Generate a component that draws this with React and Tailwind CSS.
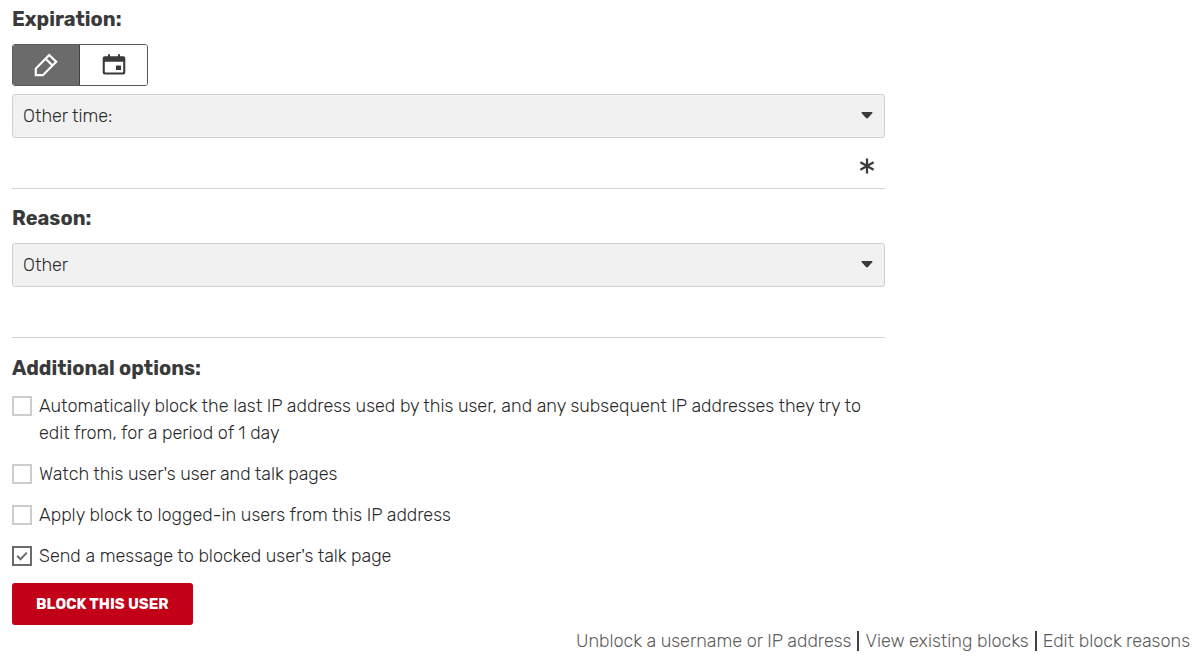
import React, { useState } from "react";

const blockOptions = [
  {
    id: "autoblock",
    label:
      "Automatically block the last IP address used by this user, and any subsequent IP addresses they try to edit from, for a period of 1 day",
    checked: false,
  },
  { id: "watch", label: "Watch this user's user and talk pages", checked: false },
  { id: "hardblock", label: "Apply block to logged-in users from this IP address", checked: false },
  { id: "message", label: "Send a message to blocked user's talk page", checked: true },
];

const footerLinks = ["Unblock a username or IP address", "View existing blocks", "Edit block reasons"];

const PencilIcon = () => (
  <svg viewBox="0 0 24 24" className="size-6" fill="none" stroke="currentColor" strokeWidth="2.2" aria-hidden="true">
    <path d="M1.8 22.2v-6.6L15.2 2l7 6.800L8.900 22.200z" />
    <path d="M11.600 5.700l6.900 6.800" />
  </svg>
);

const CalendarIcon = () => (
  <svg viewBox="0 0 24 24" className="size-6" fill="currentColor" aria-hidden="true">
    <path
      fillRule="evenodd"
      d="M6 1.200h2v2h8v-2h2v2h3.300a2 2 0 0 1 2 2v14.200a2 2 0 0 1-2 2H2.700a2 2 0 0 1-2-2V5.200a2 2 0 0 1 2-2H6zM2.800 8.800v9.900c0 .4.300.700.700.700h17c.4 0 .7-.3.700-.7V8.800z"
    />
    <path d="M14 12.400h5v4.600h-5z" />
  </svg>
);

const DropDown = ({ id, label, children }) => (
  <div className="relative">
    <select
      id={id}
      aria-label={label}
      className="block h-11 w-full appearance-none rounded-[3px] border border-[#d0d0d0] bg-[#f1f1f1] pl-2.5 pr-9 text-lg font-[330] text-[#2a2a2a]"
    >
      {children}
    </select>
    <svg
      viewBox="0 0 12 7"
      className="pointer-events-none absolute right-3 top-[18px] h-[7px] w-3"
      fill="currentColor"
      aria-hidden="true"
    >
      <path d="M1.200 0h9.600c.7 0 1 .8.500 1.300L7 6.100c-.6.600-1.400.600-2 0L.7 1.300C.2.8.5 0 1.200 0z" />
    </svg>
  </div>
);

const modeClass =
  "flex h-full w-[68px] items-center justify-center first:border-r first:border-[#404040]";

const App = () => {
  const [mode, setMode] = useState("relative");
  const [options, setOptions] = useState(blockOptions);

  const toggleOption = (id) =>
    setOptions(options.map((o) => (o.id === id ? { ...o, checked: !o.checked } : o)));

  return (
    <div className="bg-white pl-3 pr-2.5 pt-1 font-['Rubik','Roboto',sans-serif] text-lg leading-[27px] font-[330] text-[#3a3a3a]">
      <form className="max-w-[873px]" onSubmit={(e) => e.preventDefault()}>
        <h2 className="mb-2.5 text-xl leading-[30px] font-bold">Expiration:</h2>
        <div className="mb-2 flex h-[42px] w-[136px] overflow-hidden rounded-[3px] border border-[#5a5a5a]">
          <button
            type="button"
            aria-label="Relative time"
            onClick={() => setMode("relative")}
            className={`${modeClass} ${mode === "relative" ? "bg-[#6b6b6b] text-white" : "bg-white"}`}
          >
            <PencilIcon />
          </button>
          <button
            type="button"
            aria-label="Calendar date"
            onClick={() => setMode("date")}
            className={`${modeClass} ${mode === "date" ? "bg-[#6b6b6b] text-white" : "bg-white"}`}
          >
            <CalendarIcon />
          </button>
        </div>
        <DropDown id="expiry" label="Expiration">
          <option>Other time:</option>
        </DropDown>
        <div className="relative">
          <input
            type="text"
            aria-label="Other time"
            className="block h-[51px] w-full border-b border-[#d4d4d4] pl-2.5 pr-9 outline-none"
          />
          {/* required marker */}
          <svg
            viewBox="0 0 16 16"
            className="pointer-events-none absolute right-2.5 top-5 size-4"
            stroke="currentColor"
            strokeWidth="2.2"
            aria-hidden="true"
          >
            <path d="M8 .5v15M1.400 4.300l13.200 7.400M14.600 4.300L1.400 11.700" />
          </svg>
        </div>

        <h2 className="mt-3.5 mb-2.5 text-xl leading-[30px] font-bold">Reason:</h2>
        <DropDown id="reason" label="Reason">
          <option>Other</option>
        </DropDown>
        <input
          type="text"
          aria-label="Other reason"
          className="block h-[51px] w-full border-b border-[#d4d4d4] px-2.5 outline-none"
        />

        <h2 className="mt-[15px] mb-2.5 text-xl leading-[30px] font-bold">Additional options:</h2>
        <div className="flex flex-col gap-3.5">
          {options.map((o) => (
            <div key={o.id} className="flex items-start">
              <div className="relative mt-[3px] mr-[7px] size-5 shrink-0">
                <input
                  id={o.id}
                  type="checkbox"
                  checked={o.checked}
                  onChange={() => toggleOption(o.id)}
                  className="block size-5 appearance-none border-2 border-[#cccccc] bg-white checked:border-[#6b6b6b]"
                />
                {o.checked && (
                  <svg
                    viewBox="0 0 20 20"
                    className="pointer-events-none absolute inset-0 size-5 text-[#6b6b6b]"
                    fill="none"
                    stroke="currentColor"
                    strokeWidth="2"
                    aria-hidden="true"
                  >
                    <path d="M5.200 9.800l3.300 3.400 6.300-6.600" />
                  </svg>
                )}
              </div>
              <label htmlFor={o.id} className="text-[#2a2a2a]">
                {o.label}
              </label>
            </div>
          ))}
        </div>

        <button
          type="submit"
          className="mt-[13px] block h-[42px] rounded-[3px] bg-[#c20017] px-6 text-[15px] font-bold text-white uppercase"
        >
          Block this user
        </button>
      </form>

      <div className="mt-1.5 flex items-center justify-end text-[#5c5c5c]">
        {footerLinks.map((text) => (
          <a
            key={text}
            href="#"
            className="ml-1.5 border-l-2 border-[#404040] pl-1.5 leading-5 first:border-l-0"
          >
            {text}
          </a>
        ))}
      </div>
    </div>
  );
};

export default App;
